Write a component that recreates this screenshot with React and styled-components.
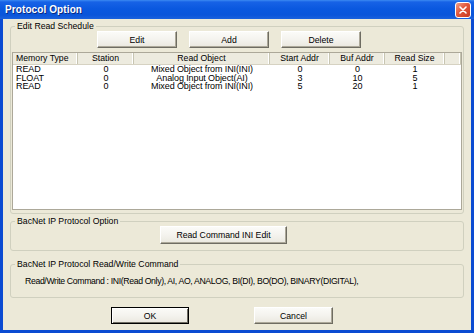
import React from 'react';
import styled, { createGlobalStyle } from 'styled-components';

const GlobalStyle = createGlobalStyle`
	html, body {
		margin: 0;
		padding: 0;
		background: #ffffff;
	}
	body {
		font-family: "Liberation Sans", Arial, sans-serif;
	}
`;

const Frame = styled.div`
	width: 474px;
	height: 333px;
	box-sizing: border-box;
	display: flex;
	flex-direction: column;
	background: #0B4BD2;
`;

const TitleBar = styled.div`
	height: 19px;
	flex: none;
	display: flex;
	align-items: center;
	justify-content: space-between;
	padding: 0 3px 0 5px;
	background: linear-gradient(to bottom, #3C8AF2 0, #1762E6 2px, #0A58DF 9px, #0A55DA 15px, #1B62DD 19px);
`;

const Title = styled.span`
	color: #ffffff;
	font-size: 10px;
	font-weight: bold;
	letter-spacing: 0.1px;
	text-shadow: 1px 1px 0 #0A2A80;
`;

const CloseButton = styled.div`
	width: 14px;
	height: 14px;
	margin-top: 1px;
	border: 1px solid #ffffff;
	border-radius: 3px;
	background: linear-gradient(135deg, #F0A08A 0%, #E2583C 45%, #C8391F 100%);
	display: flex;
	align-items: center;
	justify-content: center;
`;

const Client = styled.div`
	flex: 1;
	margin: 0 3px 3px;
	background: #ECE9D8;
	padding: 2px 7px 0;
	display: flex;
	flex-direction: column;
	font-size: 8.7px;
	color: #000000;
`;

const GroupBox = styled.fieldset`
	margin: ${(p) => p.$top || 0}px 0 0;
	padding: 0 1px ${(p) => p.$bottom || 0}px;
	border: 1px solid #D0D0BF;
	border-radius: 3px;
	min-width: 0;
	display: flex;
	flex-direction: column;
`;

const Legend = styled.legend`
	margin-left: 3px;
	padding: 0 2px;
	font-size: 8.7px;
	line-height: 10px;
`;

const ButtonRow = styled.div`
	display: flex;
	gap: ${(p) => p.$gap}px;
	padding-left: ${(p) => p.$indent}px;
	margin-top: ${(p) => p.$top || 0}px;
`;

const Button = styled.div`
	width: ${(p) => p.$w}px;
	height: ${(p) => p.$h || 17}px;
	box-sizing: border-box;
	display: flex;
	align-items: center;
	justify-content: center;
	font-size: 8.7px;
	background: linear-gradient(to bottom, #FBFBF8 0%, #F4F3EE 50%, #EAE8DF 100%);
	border: 1px solid;
	border-color: ${(p) => (p.$default ? '#000000' : '#FFFFFF #6E6C62 #6E6C62 #FFFFFF')};
	box-shadow: ${(p) => (p.$default
		? 'inset 1px 1px 0 #FFFFFF, inset -1px -1px 0 #6E6C62'
		: 'inset -1px -1px 0 #ACA899')};
`;

const ListView = styled.div`
	height: 158px;
	box-sizing: border-box;
	margin-top: 4px;
	background: #ffffff;
	border: 1px solid #ACA899;
	display: flex;
	flex-direction: column;
`;

const columns = '65px 56px 136px 60px 55px 60px 1fr';

const HeaderRow = styled.div`
	display: grid;
	grid-template-columns: ${columns};
	height: 11px;
	background: #EDEBDF;
	border-bottom: 1px solid #D6D2C2;
`;

const HeaderCell = styled.div`
	line-height: 11px;
	text-align: ${(p) => (p.$left ? 'left' : 'center')};
	padding-left: ${(p) => (p.$left ? 3 : 0)}px;
	border-right: 1px solid #C7C5B2;
	box-shadow: inset -1px 0 0 #FFFFFF;
	white-space: nowrap;
	overflow: hidden;
`;

const Row = styled.div`
	display: grid;
	grid-template-columns: ${columns};
	height: 8.5px;
`;

const Cell = styled.div`
	font-size: 9px;
	line-height: 8.5px;
	text-align: ${(p) => (p.$left ? 'left' : 'center')};
	padding-left: ${(p) => (p.$left ? 3 : 0)}px;
	white-space: nowrap;
	letter-spacing: -0.1px;
`;

const CommandText = styled.div`
	padding: 7px 0 11px 13px;
	line-height: 10px;
	white-space: nowrap;
	letter-spacing: -0.35px;
`;

const headers = ['Memory Type', 'Station', 'Read Object', 'Start Addr', 'Buf Addr', 'Read Size', ''];

const rows = [
	['READ', '0', 'Mixed Object from INI(INI)', '0', '0', '1'],
	['FLOAT', '0', 'Analog Input Object(AI)', '3', '10', '5'],
	['READ', '0', 'Mixed Object from INI(INI)', '5', '20', '1'],
];

const App = () => (
	<>
		<GlobalStyle />
		<Frame>
			<TitleBar>
				<Title>Protocol Option</Title>
				<CloseButton>
					<svg width="8" height="8" viewBox="0 0 8 8">
						<path d="M1 1 L7 7 M7 1 L1 7" stroke="#ffffff" strokeWidth="1.6" strokeLinecap="round" />
					</svg>
				</CloseButton>
			</TitleBar>
			<Client>
				<GroupBox $bottom={3}>
					<Legend>Edit Read Schedule</Legend>
					<ButtonRow $gap={12} $indent={85}>
						<Button $w={80}>Edit</Button>
						<Button $w={80}>Add</Button>
						<Button $w={80}>Delete</Button>
					</ButtonRow>
					<ListView>
						<HeaderRow>
							{headers.map((h, i) => (
								<HeaderCell key={i} $left={i === 0}>{h}</HeaderCell>
							))}
						</HeaderRow>
						{rows.map((r, i) => (
							<Row key={i}>
								{r.map((c, j) => (
									<Cell key={j} $left={j === 0}>{c}</Cell>
								))}
							</Row>
						))}
					</ListView>
				</GroupBox>
				<GroupBox $top={2} $bottom={6}>
					<Legend>BacNet IP Protocol Option</Legend>
					<ButtonRow $gap={0} $indent={148}>
						<Button $w={127} $h={18}>Read Command INI Edit</Button>
					</ButtonRow>
				</GroupBox>
				<GroupBox $top={8}>
					<Legend>BacNet IP Protocol Read/Write Command</Legend>
					<CommandText>
						Read/Write Command : INI(Read Only), AI, AO, ANALOG, BI(DI), BO(DO), BINARY(DIGITAL),
					</CommandText>
				</GroupBox>
				<ButtonRow $gap={65} $indent={101} $top={9}>
					<Button $w={78} $default>OK</Button>
					<Button $w={79}>Cancel</Button>
				</ButtonRow>
			</Client>
		</Frame>
	</>
);

export default App;
